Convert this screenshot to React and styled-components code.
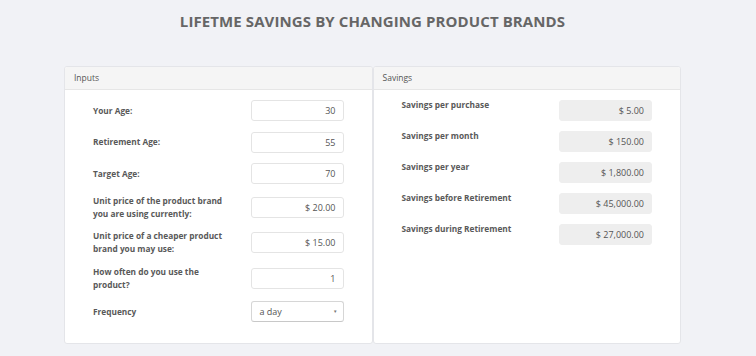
import React from "react";
import styled, { createGlobalStyle } from "styled-components";

const Global = createGlobalStyle`
  html, body { margin: 0; padding: 0; background: #f1f2f6; }
  body { font-family: "Open Sans", "Liberation Sans", sans-serif; color: #555; }
  * { box-sizing: border-box; }
`;

const Page = styled.div`
  width: 745px;
  padding-top: 11px;
`;

const Title = styled.h1`
  margin: 0;
  text-align: center;
  font-size: 15px;
  line-height: 20px;
  font-weight: 700;
  color: #666;
  letter-spacing: 0.1px;
`;

const Panels = styled.div`
  width: 617px;
  margin: 35px auto 0;
  display: flex;
`;

const Panel = styled.section`
  flex: 1;
  background: #fff;
  border: 1px solid #e4e5e9;
  border-radius: 3px;
  display: flex;
  flex-direction: column;
  overflow: hidden;
`;

const PanelHeader = styled.div`
  height: 23px;
  background: #f5f5f5;
  border-bottom: 1px solid #e6e6e6;
  padding: 0 9px;
  font-size: 8.5px;
  line-height: 22px;
  color: #555;
`;

const PanelBody = styled.div`
  padding: 10px 28px 21px;
  display: grid;
  grid-template-columns: 1fr 93px;
  column-gap: 8px;
  row-gap: ${(p) => p.$gap || "10px"};
  align-content: start;
`;

const Label = styled.label`
  font-size: 8.3px;
  line-height: 13px;
  font-weight: 700;
  color: #595959;
  align-self: ${(p) => (p.$top ? "start" : "center")};
  margin-top: ${(p) => (p.$top ? "-2px" : "-1px")};
`;

const Field = styled.div`
  height: 21px;
  align-self: center;
  border: 1px solid ${(p) => (p.$readonly ? "#eeeeee" : "#e4e4e4")};
  background: ${(p) => (p.$readonly ? "#eeeeee" : "#fff")};
  border-radius: 3px;
  font-size: 9px;
  line-height: 19px;
  color: #555;
  text-align: right;
  padding: 0 7px;
`;

const Select = styled.div`
  height: 21px;
  align-self: center;
  border: 1px solid #d6d6d6;
  border-bottom-color: #c8c8c8;
  background: #fff;
  border-radius: 3px;
  font-size: 9px;
  line-height: 19px;
  color: #555;
  padding: 0 5px 0 8px;
  display: flex;
  justify-content: space-between;
  align-items: center;
`;

const Caret = styled.span`
  font-size: 4.5px;
  color: #777;
`;

const inputs = [
  ["Your Age:", "30"],
  ["Retirement Age:", "55"],
  ["Target Age:", "70"],
  [["Unit price of the product brand", "you are using currently:"], "$ 20.00"],
  [["Unit price of a cheaper product", "brand you may use:"], "$ 15.00"],
  [["How often do you use the", "product?"], "1"],
];

const savings = [
  ["Savings per purchase", "$ 5.00"],
  ["Savings per month", "$ 150.00"],
  ["Savings per year", "$ 1,800.00"],
  ["Savings before Retirement", "$ 45,000.00"],
  ["Savings during Retirement", "$ 27,000.00"],
];

export default function App() {
  return (
    <Page>
      <Global />
      <Title>LIFETME SAVINGS BY CHANGING PRODUCT BRANDS</Title>
      <Panels>
        <Panel>
          <PanelHeader>Inputs</PanelHeader>
          <PanelBody $gap="10.5px">
            {inputs.map(([label, value], i) => (
              <React.Fragment key={i}>
                <Label>
                  {Array.isArray(label) ? (
                    <>
                      {label[0]}
                      <br />
                      {label[1]}
                    </>
                  ) : (
                    label
                  )}
                </Label>
                <Field>{value}</Field>
              </React.Fragment>
            ))}
            <Label>Frequency</Label>
            <Select>
              <span>a day</span>
              <Caret>▼</Caret>
            </Select>
          </PanelBody>
        </Panel>
        <Panel>
          <PanelHeader>Savings</PanelHeader>
          <PanelBody $gap="10px">
            {savings.map(([label, value], i) => (
              <React.Fragment key={i}>
                <Label $top>{label}</Label>
                <Field $readonly>{value}</Field>
              </React.Fragment>
            ))}
          </PanelBody>
        </Panel>
      </Panels>
    </Page>
  );
}
